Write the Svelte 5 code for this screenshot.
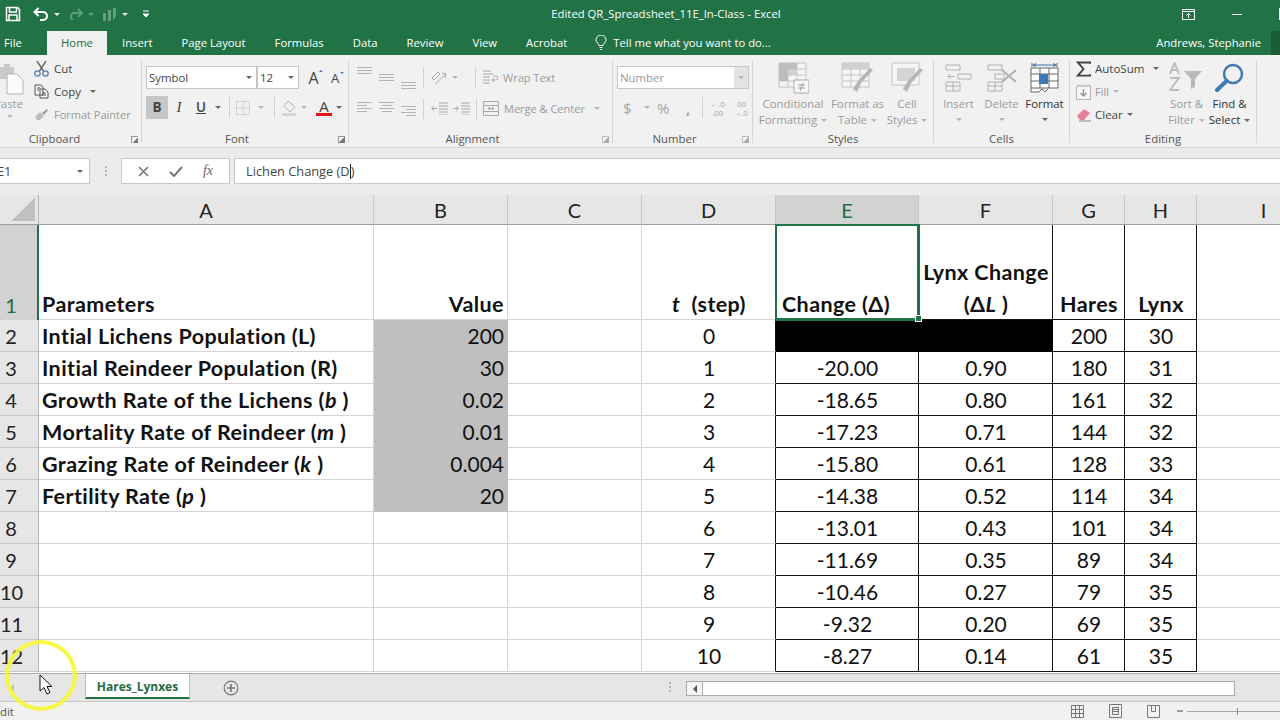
<script>
  const cols = ['A','B','C','D','E','F','G','H','I'];
  const params = [
    [['Intial Lichens Population (L)'], '200'],
    [['Initial Reindeer Population (R)'], '30'],
    [['Growth Rate of the Lichens (', 'b', ' )'], '0.02'],
    [['Mortality Rate of Reindeer (', 'm', ' )'], '0.01'],
    [['Grazing Rate of Reindeer (', 'k', ' )'], '0.004'],
    [['Fertility Rate (', 'p', ' )'], '20']
  ];
  const series = [
    ['0','','','200','30'],
    ['1','-20.00','0.90','180','31'],
    ['2','-18.65','0.80','161','32'],
    ['3','-17.23','0.71','144','32'],
    ['4','-15.80','0.61','128','33'],
    ['5','-14.38','0.52','114','34'],
    ['6','-13.01','0.43','101','34'],
    ['7','-11.69','0.35','89','34'],
    ['8','-10.46','0.27','79','35'],
    ['9','-9.32','0.20','69','35'],
    ['10','-8.27','0.14','61','35']
  ];
  const rows = series.map((s, i) => ({ n: i + 2, p: params[i], s }));
  const tabs = ['Insert', 'Page Layout', 'Formulas', 'Data', 'Review', 'View', 'Acrobat'];
</script>

<div class="app">
  <header class="title">
    <div class="qat">
      <svg width="16" height="16" viewBox="0 0 16 16"><path d="M1.500 1.500h11l2 2v11h-13z M4.500 1.500v4.500h7v-4.500 M4 14.500v-5.500h8v5.500" fill="none" stroke="#fff" stroke-width="1.500"/></svg>
      <svg class="undo" width="16" height="14" viewBox="0 0 16 14"><path d="M5.500 1L1.500 5l4 4M2 5h8a4 4 0 0 1 0 8H7" fill="none" stroke="#fff" stroke-width="2"/></svg>
      <i class="car w"></i>
      <svg class="redo" width="15" height="12" viewBox="0 0 15 12"><path d="M10 1l4 4-4 4M13 5H5a4 4 0 0 0 0 7" fill="none" stroke="#5d9d7d" stroke-width="2"/></svg>
      <i class="car f"></i>
      <svg class="qsort" width="15" height="14" viewBox="0 0 15 14"><path d="M1 6h3v8H1zM6 3h3v11H6zM11 1h3v8l-3 5z" fill="#639f81"/></svg>
      <i class="car w"></i>
      <svg class="more" width="8" height="8" viewBox="0 0 8 8"><path d="M1 1h6M1 4h6l-3 3z" fill="#fff" stroke="#fff"/></svg>
    </div>
    <div class="doc">Edited QR_Spreadsheet_11E_In-Class - Excel</div>
    <div class="win">
      <svg width="13" height="11" viewBox="0 0 13 11"><path d="M.5.500h12v10H.5zM.5 2.500h12M6.500 9V4.500M4.500 6.500l2-2 2 2" fill="none" stroke="#fff"/></svg>
      <span class="min"></span>
      <span class="max"></span>
    </div>
  </header>

  <nav class="tabs">
    <span class="file">File</span>
    <span class="home">Home</span>
    <div class="tablist">
      {#each tabs as t}<span class="tab">{t}</span>{/each}
    </div>
    <svg class="bulb" width="12" height="15" viewBox="0 0 12 15"><path d="M4 10.500C3.500 8.500 1 7.500 1 5a5 5 0 0 1 10 0c0 2.500-2.500 3.500-3 5.500zM4.500 12.500h3M5 14.500h2" fill="none" stroke="#fff"/></svg>
    <span class="tell">Tell me what you want to do...</span>
    <span class="user">Andrews, Stephanie</span>
    <span class="avatar"></span>
  </nav>

  <section class="ribbon">
    <div class="group clip">
      <div class="body clipbody">
        <div class="paste">
          <svg width="25" height="32" viewBox="0 0 25 32"><path d="M-4 4h8V1h6v3h4v12H-4z" fill="#c9c9c9"/><path d="M7 11h10l6 6v14H7z" fill="#fbfbfb" stroke="#b5b5b5"/></svg>
          <span>Paste</span>
          <i class="car g"></i>
        </div>
        <div class="cliprows">
          <div class="cr dark">
            <svg width="15" height="16" viewBox="0 0 15 16"><path d="M3 0l6.500 10M12 0L5.500 10" stroke="#6b6b6b" stroke-width="1.500"/><circle cx="3.500" cy="12.500" r="2.700" fill="none" stroke="#4a7ab0" stroke-width="1.200"/><circle cx="11.500" cy="12.500" r="2.700" fill="none" stroke="#4a7ab0" stroke-width="1.200"/></svg>
            <span>Cut</span>
          </div>
          <div class="cr dark">
            <svg width="15" height="15" viewBox="0 0 15 15"><path d="M1 1h6l2 2v8H1zM6 5h5l3 3v6H6z" fill="#f8f8f8" stroke="#555"/><path d="M3 4h3M3 6h2M8 9h4M8 11h4" stroke="#555"/></svg>
            <span>Copy</span><i class="car d copycar"></i>
          </div>
          <div class="cr">
            <svg width="15" height="13" viewBox="0 0 15 13"><path d="M1 9l5-5 4 4-4 4H3z" fill="#bdbdbd"/><path d="M8 5l5-4 1 1-4 5z" fill="#9a9a9a"/></svg>
            <span>Format Painter</span>
          </div>
        </div>
      </div>
      <div class="label l-off">Clipboard<i class="launch"></i></div>
    </div>

    <div class="group font">
      <div class="body pad">
        <div class="rw one">
          <div class="sel fname"><span>Symbol</span><i class="car d"></i></div>
          <div class="sel fsize"><span>12</span><i class="car d"></i></div>
          <span class="grow">A<i class="tri up"></i></span>
          <span class="shrink">A<i class="tri down"></i></span>
        </div>
        <div class="rw two">
          <span class="fb bold">B</span>
          <span class="fb ital">I</span>
          <span class="fb under">U</span>
          <i class="car d c-u"></i>
          <i class="vs"></i>
          <svg class="bord" width="14" height="14" viewBox="0 0 14 14"><path d="M.5.500h13v13H.5zM7 .5v13M.5 7h13" fill="none" stroke="#b9b9b9" stroke-dasharray="1 1"/></svg>
          <i class="car g c-b"></i>
          <i class="vs"></i>
          <svg class="fill" width="17" height="16" viewBox="0 0 17 16"><path d="M7 1l7 6-5 5-6-6z" fill="none" stroke="#b5b5b5"/><path d="M1 13h14v3H1z" fill="#d5d5d5"/></svg>
          <i class="car g c-f"></i>
          <span class="fcol">A</span>
          <i class="car d"></i>
        </div>
      </div>
      <div class="label l-off2">Font<i class="launch"></i></div>
    </div>

    <div class="group align">
      <div class="body pad">
        <div class="rw a1">
          <div class="lines t"><i></i><i></i><i></i></div>
          <div class="lines m"><i></i><i></i><i></i></div>
          <div class="lines b"><i></i><i></i><i></i></div>
          <i class="vs"></i>
          <svg class="orient" width="16" height="15" viewBox="0 0 16 15"><path d="M1 8l6-6 2 2-6 6zM4 14L15 4M11 3l4 1-1 4" fill="none" stroke="#a8a8a8"/></svg>
          <i class="car g o-c"></i>
          <i class="vs o-s"></i>
          <svg class="ai" width="16" height="15" viewBox="0 0 16 15"><path d="M1 1h8M1 4h10M1 7h7M1 10h7M1 13h7M11 6h3a2 2 0 0 1 0 4h-4l2-2m-2 2l2 2" fill="none" stroke="#a8a8a8"/></svg>
          <span class="gt">Wrap Text</span>
        </div>
        <div class="rw a2">
          <div class="lines l"><i></i><i></i><i></i><i></i></div>
          <div class="lines c"><i></i><i></i><i></i><i></i></div>
          <div class="lines r"><i></i><i></i><i></i><i></i></div>
          <i class="vs"></i>
          <svg class="ind1" width="17" height="13" viewBox="0 0 17 13"><path d="M8 1h9M8 4h9M8 7h9M8 10h9M8 13h9M6 6.500H1M3 4L.5 6.500 3 9" fill="none" stroke="#a8a8a8"/></svg>
          <svg class="ind2" width="17" height="13" viewBox="0 0 17 13"><path d="M8 1h9M8 4h9M8 7h9M8 10h9M8 13h9M0 6.500h5M3 4l2.500 2.500L3 9" fill="none" stroke="#a8a8a8"/></svg>
          <i class="vs i-s"></i>
          <svg class="ai" width="16" height="15" viewBox="0 0 16 15"><path d="M.5.500h15v14H.5zM.5 4.500h15M.5 10.500h15M5 7.500h6M5 7.500l2-1.500M5 7.500l2 1.500M11 7.500L9 6M11 7.500L9 9" fill="none" stroke="#a8a8a8"/></svg>
          <span class="gt">Merge &amp; Center</span>
          <i class="car g m-c"></i>
        </div>
      </div>
      <div class="label l-off2">Alignment<i class="launch f"></i></div>
    </div>

    <div class="group number">
      <div class="body pad">
        <div class="sel nsel"><span>Number</span><b><i class="car g"></i></b></div>
        <div class="rw n2">
          <span class="ns dollar">$</span>
          <i class="car g"></i>
          <span class="ns pct">%</span>
          <span class="ns comma">,</span>
          <i class="vs"></i>
          <span class="dec">←.0<br>.00</span>
          <span class="dec">.00<br>→.0</span>
        </div>
      </div>
      <div class="label l-off2">Number<i class="launch f"></i></div>
    </div>

    <div class="group styles">
      <div class="body big">
        <div class="bb cf">
          <svg width="31" height="32" viewBox="0 0 31 32"><path d="M1 1h27v24H1zM1 7h27M1 13h27M1 19h27M10 1v24M19 1v24" fill="#f5f5f5" stroke="#c4c4c4"/><path d="M1 1h18v6h-9v12H1z" fill="#bdbdbd"/><path d="M10 7h9v6h-9z" fill="#cfcfcf"/><path d="M16 18h15v13H16z" fill="#f8f8f8" stroke="#a8a8a8"/><path d="M20 23h7M20 26h7M25 21l-3 8" stroke="#9a9a9a"/></svg>
          <span>Conditional</span><span>Formatting<i class="car g in"></i></span>
        </div>
        <div class="bb ft">
          <svg width="33" height="32" viewBox="0 0 33 32"><path d="M1 1h27v24H1zM1 7h27M1 13h27M1 19h27M10 1v24M19 1v24" fill="#f5f5f5" stroke="#c4c4c4"/><path d="M1 1h27v6H1z" fill="#d0d0d0"/><path d="M16 30l4-9 12-13-3-2-12 13-5 8z" fill="#b5b5b5"/></svg>
          <span>Format as</span><span>Table<i class="car g in"></i></span>
        </div>
        <div class="bb cs">
          <svg width="33" height="32" viewBox="0 0 33 32"><path d="M1 1h27v22H1z" fill="#f5f5f5" stroke="#c4c4c4"/><path d="M6 6h18v13H6z" fill="#d4d4d4"/><path d="M16 30l4-9 12-13-3-2-12 13-5 8z" fill="#b5b5b5"/></svg>
          <span>Cell</span><span>Styles<i class="car g in"></i></span>
        </div>
      </div>
      <div class="label">Styles</div>
    </div>

    <div class="group cells">
      <div class="body big">
        <div class="bb cb">
          <svg width="27" height="28" viewBox="0 0 27 28"><path d="M1 1h14v5H1zM13 10h13v5H13zM1 18h14v9H1zM8 18v9M1 22h14M10 12.500H3M5.500 10L3 12.500 5.500 15" fill="none" stroke="#b0b0b0"/></svg>
          <span>Insert</span><i class="car g"></i>
        </div>
        <div class="bb cb">
          <svg width="30" height="28" viewBox="0 0 30 28"><path d="M1 1h14v5H1zM8 10h9v5H8zM1 18h14v9H1zM8 18v9M1 22h14" fill="none" stroke="#b0b0b0"/><path d="M15 6l14 12M29 6L15 18" stroke="#b0b0b0" stroke-width="2"/></svg>
          <span>Delete</span><i class="car g"></i>
        </div>
        <div class="bb cb active">
          <svg width="29" height="30" viewBox="0 0 29 30"><path d="M1 5h27v20H1zM1 11h27M1 18h27M10 5v20M19 5v20M1 25v4h8l3-3 3 3M15 29l3-3" fill="#fff" stroke="#666"/><path d="M9 11h9v10H9z" fill="#3f78b4"/><path d="M2 0v4M27 0v4M3 2h23M3 2l3-1.500M3 2l3 1.500M26 2l-3-1.500M26 2l-3 1.500" stroke="#3b6ea5" fill="none"/></svg>
          <span>Format</span><i class="car d"></i>
        </div>
      </div>
      <div class="label">Cells</div>
    </div>

    <div class="group editing">
      <div class="body edit">
        <div class="cliprows er">
          <div class="cr dark">
            <svg width="16" height="16" viewBox="0 0 16 16"><path d="M15 2.500V1H2l6 7-6 7h13v-1.500" fill="none" stroke="#444" stroke-width="2"/></svg>
            <span>AutoSum</span><i class="car d as"></i>
          </div>
          <div class="cr">
            <svg width="15" height="16" viewBox="0 0 15 16"><path d="M.5 2.500h14v13H.5z" fill="#f7f7f7" stroke="#b5b5b5"/><path d="M.5.500h14v2H.5z" fill="#cfcfcf"/><path d="M7.500 5v7M4.500 9l3 3 3-3" fill="none" stroke="#9a9a9a" stroke-width="1.500"/></svg>
            <span>Fill</span><i class="car g in"></i>
          </div>
          <div class="cr dark">
            <svg width="15" height="14" viewBox="0 0 15 14"><path d="M1 8l7-7 6 4-6 7H4z" fill="#e27f9a"/><path d="M3 13h12" stroke="#888"/></svg>
            <span>Clear</span><i class="car d in"></i>
          </div>
        </div>
        <div class="bb sortbtn">
          <svg class="sorticon" width="36" height="29" viewBox="0 0 36 29"><path d="M1 12L5.500 1 10 12M2.500 8h6M1 16h9l-9 12h9" fill="none" stroke="#bdbdbd" stroke-width="2"/><path d="M15 9h18l-7 8v8l-4 2V17z" fill="#b9b9b9"/></svg>
          <span>Sort &amp;</span><span>Filter<i class="car g in"></i></span>
        </div>
        <div class="bb find active">
          <svg width="29" height="30" viewBox="0 0 29 30"><circle cx="18" cy="11" r="9" fill="none" stroke="#3f78b4" stroke-width="2.500"/><path d="M11.500 18L2 27" stroke="#3f78b4" stroke-width="4" stroke-linecap="round"/></svg>
          <span>Find &amp;</span><span>Select<i class="car d in"></i></span>
        </div>
      </div>
      <div class="label">Editing</div>
    </div>
  </section>

  <section class="fbar">
    <div class="namebox"><span>E1</span><i class="car d"></i></div>
    <div class="dots"></div>
    <div class="fbtns">
      <svg width="11" height="11" viewBox="0 0 11 11"><path d="M1 1l9 9M10 1l-9 9" stroke="#777" stroke-width="1.600"/></svg>
      <svg width="14" height="11" viewBox="0 0 14 11"><path d="M1 6l4 4 8-9" fill="none" stroke="#777" stroke-width="2"/></svg>
      <span class="fx">fx</span>
    </div>
    <div class="finput">Lichen Change (D<span class="caret"></span>)</div>
  </section>

  <main class="sheet">
    <div class="corner"><i></i></div>
    {#each cols as c}
      <div class="ch" class:on={c === 'E'}>{c}</div>
    {/each}

    <div class="rh rsel tall">1</div>
    <div class="cell tall bot first">Parameters</div>
    <div class="cell tall bot r">Value</div>
    <div class="cell tall"></div>
    <div class="cell tall bot ctr blk-r"><em>t</em>&nbsp;&nbsp;(step)</div>
    <div class="cell tall bot selected">Change (Δ)<i class="handle"></i></div>
    <div class="cell tall bot ctr blk stack"><span>Lynx Change</span><span>(Δ<em>L</em> )</span></div>
    <div class="cell tall bot ctr blk">Hares</div>
    <div class="cell tall bot ctr blk">Lynx</div>
    <div class="cell tall"></div>

    {#each rows as row}
      <div class="rh">{row.n}</div>
      <div class="cell first">{#if row.p}{row.p[0][0]}{#if row.p[0][1]}<em>{row.p[0][1]}</em>{row.p[0][2]}{/if}{/if}</div>
      <div class="cell r reg" class:shade={row.p}>{row.p ? row.p[1] : ''}</div>
      <div class="cell"></div>
      <div class="cell ctr reg blk-r">{row.s[0]}</div>
      <div class="cell ctr reg blk" class:black={row.n === 2}>{row.s[1]}</div>
      <div class="cell ctr reg blk" class:black={row.n === 2}>{row.s[2]}</div>
      <div class="cell ctr reg blk">{row.s[3]}</div>
      <div class="cell ctr reg blk">{row.s[4]}</div>
      <div class="cell"></div>
    {/each}
  </main>

  <section class="tabbar">
    <i class="tl"></i>
    <div class="sheettab">Hares_Lynxes</div>
    <svg class="plus" width="16" height="16" viewBox="0 0 16 16"><circle cx="8" cy="8" r="6.800" fill="none" stroke="#777" stroke-width="1.200"/><path d="M8 4v8M4 8h8" stroke="#777" stroke-width="1.600"/></svg>
    <div class="dots tdots"></div>
    <div class="hscroll"><span class="hl"><i class="tl dk"></i></span></div>
  </section>

  <footer class="status">
    <span class="st">dit</span>
    <div class="views">
      <svg width="13" height="13" viewBox="0 0 13 13"><path d="M.5.500h12v12H.5zM4.500.5v12M8.500.5v12M.5 4.500h12M.5 8.500h12" fill="none" stroke="#777"/></svg>
      <svg width="13" height="14" viewBox="0 0 13 14"><path d="M.5.500h12v13H.5zM3.500 3.500h6v7h-6zM4 5.500h5M4 7.500h5" fill="none" stroke="#777"/></svg>
      <svg width="13" height="13" viewBox="0 0 13 13"><path d="M.5.500h12v12H.5zM4.500.5v6h4v-6" fill="none" stroke="#777"/></svg>
      <i class="zm"></i>
      <div class="zs"><i></i></div>
    </div>
  </footer>

  <div class="ring"></div>
  <svg class="pointer" width="14" height="22" viewBox="0 0 14 22"><path d="M1 1v16l4-3.500L8 20l3-1.500-3-6h5z" fill="#fff" stroke="#111" stroke-width="1"/></svg>
</div>

<style>
  :global(body) { margin: 0; background: #fff; }
  .app {
    position: relative; width: 1280px; height: 720px; overflow: hidden;
    display: flex; flex-direction: column;
    font-family: "Open Sans", "Noto Sans", sans-serif; font-size: 11.4px; color: #444;
  }
  i { display: block; font-style: normal; }
  .car { width: 0; height: 0; border: 3px solid transparent; border-top: 3px solid #777; border-bottom: 0; flex: none; }
  .car.w { border-top-color: #e8f0ec; }
  .car.f { border-top-color: #5d9d7d; }
  .car.g { border-top-color: #b5b5b5; }
  .car.d { border-top-color: #666; }
  .car.in { display: inline-block; vertical-align: middle; margin-left: 4px; }

  .title { height: 28px; flex: none; background: #217346; display: flex; align-items: center; color: #fff; position: relative; }
  .qat { display: flex; align-items: center; padding-left: 5px; }
  .undo { margin-left: 12px; }
  .qat .car { margin-left: 5px; }
  .redo { margin-left: 8px; }
  .qsort { margin-left: 8px; }
  .more { margin-left: 14px; }
  .doc { position: absolute; left: 0; right: 0; top: 5px; line-height: 17px; padding-left: 52px; text-align: center; font-size: 11.3px; }
  .win { margin-left: auto; display: flex; align-items: center; }
  .min { width: 10px; height: 1px; background: #fff; margin-left: 37px; }
  .max { width: 10px; height: 10px; border: 1px solid #fff; margin-left: 37px; margin-right: -11px; }

  .tabs { height: 27px; flex: none; background: #217346; color: #fff; display: flex; align-items: flex-end; font-size: 11.3px; position: relative; }
  .tabs span { line-height: 24px; }
  .file { width: 47px; padding-left: 4px; box-sizing: border-box; }
  .home { width: 60px; height: 24px; background: #f1f1f1; color: #1f6b43; text-align: center; }
  .tablist { display: flex; gap: 29px; margin-left: 15px; }
  .bulb { margin-left: 28px; margin-bottom: 5px; }
  .tell { margin-left: 6px; }
  .user { margin-left: auto; margin-right: 10px; }
  .avatar { width: 9px; height: 24px; background: #1a5c38; }

  .ribbon { height: 93px; flex: none; box-sizing: border-box; padding-top: 5px; background: #f1f1f1; border-bottom: 1px solid #d2d2d2; display: flex; align-items: flex-start; }
  .group { height: 83px; box-sizing: border-box; border-right: 1px solid #d6d6d6; display: flex; flex-direction: column; position: relative; flex: none; }
  .body { flex: 1; min-height: 0; }
  .label { height: 16px; line-height: 16px; margin-bottom: -4px; text-align: center; color: #555; }
  .l-off { padding-right: 32px; }
  .l-off2 { padding-right: 16px; }
  .launch { position: absolute; right: 3px; bottom: 0; width: 6px; height: 6px; border-left: 1px solid #999; border-top: 1px solid #999; background: linear-gradient(135deg, transparent 50%, #777 50%); }
  .launch.f { opacity: .55; }

  .clip { width: 142px; }
  .clipbody { display: flex; }
  .paste { width: 34px; position: relative; color: #9a9a9a; overflow: hidden; flex: none; }
  .paste svg { display: block; margin-top: 3px; }
  .paste span { display: block; margin: 1px 0 0 -6px; line-height: 16px; }
  .paste .car { margin: 3px 0 0 7px; }
  .cliprows { display: flex; flex-direction: column; margin-top: -3px; }
  .cr { height: 23px; display: flex; align-items: center; color: #9a9a9a; white-space: nowrap; font-size: 11px; }
  .cr.dark { color: #444; font-size: 11.5px; }
  .cr svg { margin-right: 5px; width: 15px; flex: none; }
  .copycar { margin-left: 9px; }

  .font { width: 207px; }
  .pad { box-sizing: border-box; padding: 6px 0 0 4px; }
  .rw { display: flex; align-items: center; }
  .one { height: 23px; }
  .two { height: 23px; margin-top: 7px; }
  .sel { height: 23px; box-sizing: border-box; border: 1px solid #c6c6c6; background: #fff; display: flex; align-items: center; justify-content: space-between; padding: 0 4px 0 2px; }
  .fname { width: 111px; }
  .fsize { width: 42px; }
  .grow { position: relative; margin-left: 5px; font-size: 16px; width: 19px; text-align: center; }
  .shrink { position: relative; margin-left: 3px; font-size: 13px; width: 18px; text-align: center; }
  .tri { position: absolute; right: 0; top: 3px; width: 0; height: 0; border: 2.500px solid transparent; }
  .tri.up { border-bottom-color: #4a7ab0; border-top: 0; }
  .tri.down { border-top-color: #4a7ab0; border-bottom: 0; }
  .fb { width: 22px; height: 23px; line-height: 23px; text-align: center; font-size: 13.5px; }
  .bold { background: #c6c6c6; font-weight: 700; }
  .ital { font-style: italic; font-family: "Liberation Serif", serif; font-size: 15px; }
  .under { text-decoration: underline; font-weight: 600; }
  .c-u { margin-left: 3px; }
  .vs { width: 1px; height: 21px; background: #d0d0d0; flex: none; }
  .two .vs { margin-left: 8px; }
  .bord { margin-left: 6px; }
  .c-b { margin: 0 2px 0 8px; }
  .fill { margin-left: 6px; }
  .c-f { margin-left: 3px; }
  .fcol { margin-left: 9px; width: 16px; text-align: center; font-size: 15px; line-height: 13px; border-bottom: 3px solid #e81416; margin-right: 4px; }

  .align { width: 264px; }
  .a1, .a2 { height: 23px; padding-left: 4px; }
  .a2 { margin-top: 8px; }
  .lines { width: 15px; margin-right: 7px; height: 14px; display: flex; flex-direction: column; gap: 2px; flex: none; }
  .lines i { height: 1px; background: #b5b5b5; }
  .lines.t { justify-content: flex-start; margin-top: -8px; }
  .lines.m { justify-content: center; }
  .lines.b { justify-content: flex-end; margin-top: 8px; }
  .lines.l i:nth-child(even) { width: 10px; }
  .lines.c i:nth-child(even) { width: 10px; margin: 0 auto; }
  .lines.r i:nth-child(even) { width: 10px; margin-left: auto; }
  .orient { margin-left: 7px; }
  .o-c { margin-left: 5px; }
  .o-s { margin-left: 17px; }
  .ai { margin: 0 5px 0 6px; flex: none; }
  .gt { color: #9a9a9a; font-size: 11px; }
  .m-c { margin-left: 9px; }
  .ind1 { margin-left: 7px; }
  .ind2 { margin-left: 5px; }
  .i-s { margin-left: 6px; }

  .number { width: 140px; }
  .nsel { width: 132px; color: #9a9a9a; padding: 0 0 0 2px; }
  .nsel b { width: 14px; height: 21px; background: #e3e3e3; display: flex; align-items: center; justify-content: center; }
  .n2 { height: 23px; margin-top: 7px; color: #a6a6a6; padding-left: 6px; }
  .ns { font-size: 15px; }
  .dollar { width: 12px; margin-right: 9px; }
  .pct { margin-left: 7px; width: 21px; }
  .comma { margin-left: 8px; width: 16px; font-weight: 700; line-height: 12px; }
  .dec { font-size: 8px; line-height: 9px; margin-left: 6px; width: 17px; text-align: center; }

  .big { display: flex; }
  .bb { display: flex; flex-direction: column; align-items: center; color: #9a9a9a; line-height: 16px; flex: none; white-space: nowrap; }
  .bb svg { display: block; margin: 2px 0 2px; height: 32px; flex: none; }
  .styles { width: 181px; }
  .cf { width: 76px; padding-left: 2px; }
  .ft { width: 47px; margin-left: 3px; }
  .cs { width: 48px; margin-left: 2px; }
  .cells { width: 136px; }
  .cells .big { padding-left: 3px; }
  .cb { width: 43px; }
  .cb .car { margin-top: 6px; }
  .bb.active { color: #333; }

  .editing { width: 187px; }
  .edit { display: flex; padding-left: 6px; }
  .er { width: 89px; flex: none; }
  .er .cr svg { margin-right: 4px; }
  .as { margin-left: 9px; }
  .sortbtn { width: 43px; }
  .bb .sorticon { margin: 2px 0 5px; height: 29px; }
  .find { width: 43px; }

  .fbar { height: 47px; flex: none; box-sizing: border-box; padding-top: 10px; background: #ececec; display: flex; align-items: flex-start; font-size: 12.8px; }
  .namebox { width: 91px; height: 26px; box-sizing: border-box; border: 1px solid #c9c9c9; border-left: 0; background: #fff; display: flex; align-items: center; justify-content: space-between; padding: 0 6px 0 0; margin-left: -1px; }
  .namebox span { margin-left: -2px; }
  .dots { width: 2px; height: 11px; margin: 8px 14px 0 15px; background: repeating-linear-gradient(#b5b5b5 0 2px, transparent 2px 4px); flex: none; }
  .fbtns { width: 109px; height: 26px; box-sizing: border-box; border: 1px solid #c9c9c9; background: #fff; display: flex; align-items: center; justify-content: space-around; padding: 0 6px; }
  .fx { font-family: "Liberation Serif", serif; font-style: italic; color: #666; font-size: 14px; }
  .finput { flex: 1; height: 26px; line-height: 25px; margin-left: 4px; box-sizing: border-box; border: 1px solid #c9c9c9; border-right: 0; background: #fff; padding-left: 11px; color: #444; }
  .caret { display: inline-block; width: 1px; height: 15px; background: #222; vertical-align: -3px; }

  .sheet {
    flex: none; height: 478px; overflow: hidden; background: #fff;
    display: grid; grid-template-columns: 39px 335px 134px 134px 134px 143px 134px 72px 72px 134px;
    grid-template-rows: 30px 95px repeat(12, 32px);
    width: 1331px;
    font-family: Lato, "Open Sans", sans-serif; font-size: 21px; color: #111;
  }
  .corner { background: #e6e6e6; border-right: 1px solid #b5b5b5; border-bottom: 1px solid #9d9d9d; }
  .corner i { margin: 3px 0 0 12px; width: 23px; height: 23px; background: linear-gradient(135deg, transparent 50%, #c0c0c0 50%); }
  .ch { background: #e6e6e6; border-right: 1px solid #c6c6c6; border-bottom: 1px solid #9d9d9d; text-align: center; line-height: 30px; font-size: 20px; color: #222; }
  .ch.on { background: #d2d2d2; color: #1f6b43; }
  .rh { background: #e6e6e6; border-right: 1px solid #b5b5b5; border-bottom: 1px solid #c6c6c6; padding-right: 16px; text-align: center; line-height: 32px; font-size: 20px; color: #222; }
  .rsel { background: #d2d2d2; color: #1f6b43; border-right: 2px solid #217346; padding-right: 15px; line-height: 30px; display: flex; align-items: flex-end; justify-content: center; }
  .cell { box-sizing: border-box; border-right: 1px solid #d4d4d4; border-bottom: 1px solid #d4d4d4; padding: 0 3px 0 4px; line-height: 33px; white-space: nowrap; overflow: hidden; font-weight: 700; font-size: 21.5px; letter-spacing: .4px; position: relative; }
  .cell em { font-style: italic; }
  .cell.first { padding-left: 3px; }
  .cell.reg { font-weight: 400; font-size: 21px; letter-spacing: 0; line-height: 31px; }
  .tall { height: 95px; }
  .bot { display: flex; align-items: flex-end; line-height: 30px; }
  .r { justify-content: flex-end; text-align: right; }
  .ctr { justify-content: center; text-align: center; }
  .stack { flex-direction: column; align-items: center; justify-content: flex-end; }
  .stack span { line-height: 30px; }
  .stack span:first-child { margin-bottom: 2px; }
  .shade { background: #bfbfbf; border-right-color: #bfbfbf; border-bottom-color: #bfbfbf; }
  .blk { border-right: 1px solid #111; border-bottom: 1px solid #111; }
  .blk-r { border-right: 1px solid #111; }
  .black { background: #000; border-color: #000; }
  .selected { padding-left: 6px; border-color: #217346; box-shadow: 0 0 0 1px #217346, inset 0 0 0 1px #217346; overflow: visible; z-index: 2; }
  .handle { position: absolute; right: -4px; bottom: -3px; width: 5px; height: 5px; background: #217346; border: 1px solid #fff; }

  .tabbar { height: 29px; flex: none; box-sizing: border-box; background: #e6e6e6; border-top: 1px solid #ababab; border-bottom: 1px solid #c6c6c6; display: flex; align-items: flex-start; position: relative; z-index: 1; }
  .tl { width: 0; height: 0; border: 4px solid transparent; border-right: 4px solid #bdbdbd; border-left: 0; }
  .tabbar > .tl { margin: 10px 0 0 10px; }
  .sheettab { width: 105px; height: 25px; margin: 0 0 0 71px; box-sizing: border-box; background: #fff; border-bottom: 2px solid #217346; border-left: 1px solid #c0c0c0; border-right: 1px solid #c0c0c0; text-align: center; line-height: 25px; color: #1f6b43; font-weight: 700; font-size: 12px; }
  .plus { margin: 6px 0 0 33px; }
  .tdots { margin: 8px 15px 0 430px; }
  .hscroll { flex: none; margin-top: 7px; width: 549px; height: 15px; box-sizing: border-box; border: 1px solid #ababab; background: #fff; display: flex; }
  .hl { width: 15px; border-right: 1px solid #ababab; background: #f5f5f5; display: flex; align-items: center; justify-content: center; }
  .tl.dk { border-right-color: #555; }

  .status { flex: 1; background: #f1f1f1; display: flex; align-items: center; color: #555; }
  .views { margin-left: auto; display: flex; align-items: center; gap: 25px; }
  .zm { width: 6px; height: 2px; background: #999; margin-left: -8px; }
  .zs { width: 93px; height: 1px; background: #a6a6a6; margin-left: -21px; position: relative; }
  .zs i { position: absolute; left: 50px; top: -3px; width: 1px; height: 7px; background: #888; }

  .ring { position: absolute; left: 5px; top: 640px; width: 64px; height: 63px; border: 4px solid rgba(247, 247, 50, .9); border-radius: 50%; filter: blur(.5px); z-index: 5; }
  .pointer { position: absolute; left: 39px; top: 674px; z-index: 6; }
</style>
